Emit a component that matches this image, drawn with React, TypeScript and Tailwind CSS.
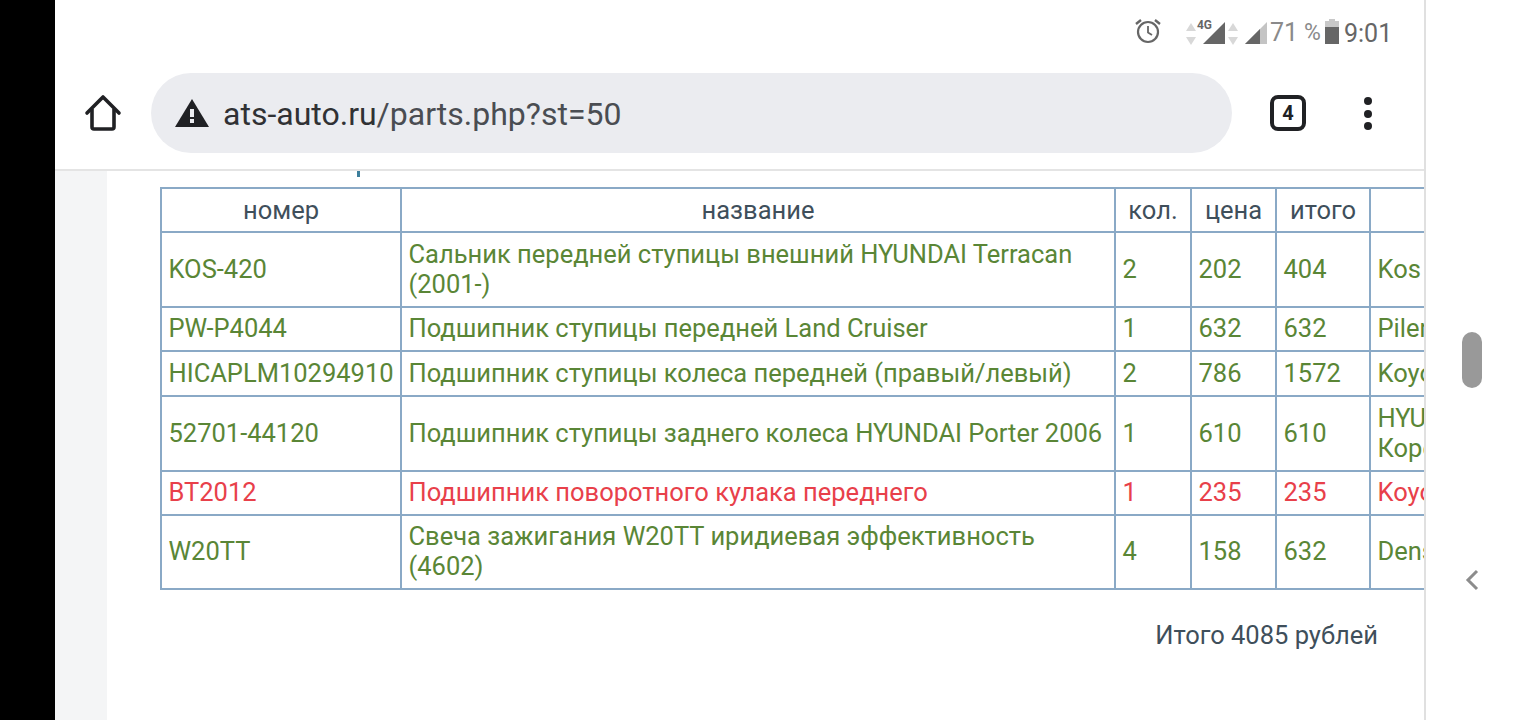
import React from 'react';

const rows = [
  { no: 'KOS-420', name: 'Сальник передней ступицы внешний HYUNDAI Terracan (2001-)', qty: '2', price: '202', total: '404', brand: 'Kos', h: 'h-[75px]' },
  { no: 'PW-P4044', name: 'Подшипник ступицы передней Land Cruiser', qty: '1', price: '632', total: '632', brand: 'Pilenga', h: 'h-[44px]' },
  { no: 'HICAPLM10294910', name: 'Подшипник ступицы колеса передней (правый/левый)', qty: '2', price: '786', total: '1572', brand: 'Koyo', h: 'h-[45px]' },
  { no: '52701-44120', name: 'Подшипник ступицы заднего колеса HYUNDAI Porter 2006', qty: '1', price: '610', total: '610', brand: 'HYUNDAI Корея', h: 'h-[75px]' },
  { no: 'BT2012', name: 'Подшипник поворотного кулака переднего', qty: '1', price: '235', total: '235', brand: 'Koyo', h: 'h-[44px]', red: true },
  { no: 'W20TT', name: 'Свеча зажигания W20TT иридиевая эффективность (4602)', qty: '4', price: '158', total: '632', brand: 'Denso', h: 'h-[74px]' },
];

const StatusIcons = () => (
  <svg width="136" height="36" viewBox="0 0 136 36" className="shrink-0">
    {/* будильник */}
    <g fill="none" stroke="#666" strokeWidth="2.2">
      <circle cx="16" cy="17" r="10" />
      <path d="M16 11v6.5l4 2.5" strokeWidth="1.8" />
      <path d="M4 9l5-4M28 9l-5-4" strokeWidth="2.4" />
    </g>
    {/* стрелки данных */}
    <g fill="#d8d8d8">
      <path d="M59 8l5 8H54zM59 30l5-8H54z" />
      <path d="M101 8l5 8H96zM101 30l5-8H96z" />
    </g>
    {/* сигнал 1 */}
    <path d="M71 29L93 7v22z" fill="#666" />
    <text x="65" y="14" fontSize="13" fontWeight="700" fill="#666" fontFamily="Roboto, sans-serif" textLength="15" lengthAdjust="spacingAndGlyphs">4G</text>
    {/* сигнал 2 */}
    <path d="M113 29l22-22v22z" fill="#c4c4c4" />
    <path d="M113 29l15-15v15z" fill="#666" />
  </svg>
);

export default function App() {
  const th = 'border-2 border-[#8aa9c6] font-normal text-center align-middle text-[#3f4f5b] px-2 h-[44px]';
  const td = 'border-2 border-[#8aa9c6] align-middle px-[6.5px] pb-[2px] font-normal overflow-hidden';
  return (
    <div className="flex w-[1520px] h-[720px] overflow-hidden bg-white font-['Roboto',sans-serif]">
      <div className="w-[55px] shrink-0 bg-black" />

      <div className="w-[1371px] shrink-0 flex flex-col border-r-2 border-[#e0e0e0]">
        {/* статус-бар */}
        <div className="h-[73px] shrink-0 flex items-start justify-end pt-[15px] pr-[34px] text-[#666]">
          <StatusIcons />
          <span className="text-[25px] leading-[36px] ml-[2px] w-[34px] text-[#8a8a8a]">71</span>
          <span className="text-[23px] leading-[36px] w-[20px] text-[#8a8a8a]">%</span>
          <svg width="14" height="25" viewBox="0 0 14 25" className="mt-[4px] ml-[1px] mr-[5px]">
            <path d="M4 0h6v2h4v23H0V2h4z" fill="#c8c8c8" />
            <rect y="8" width="14" height="17" fill="#666" />
          </svg>
          <span className="text-[25px] leading-[38px] w-[46px] whitespace-nowrap">9:01</span>
        </div>

        {/* панель браузера */}
        <div className="h-[98px] shrink-0 flex items-start border-b-2 border-[#e4e4e4]">
          <div className="w-[96px] shrink-0 flex justify-center pt-[21px]">
            <svg width="38" height="38" viewBox="0 0 38 38" fill="none" stroke="#202124" strokeWidth="3.6" strokeLinejoin="round">
              <path d="M3 19L19 3l16 16" strokeLinecap="round" />
              <path d="M8 15v18a2 2 0 0 0 2 2h18a2 2 0 0 0 2-2V15" />
            </svg>
          </div>
          <div className="w-[1081px] h-[80px] shrink-0 rounded-[40px] bg-[#ebecf0] flex items-center pl-[24px]">
            <svg width="34" height="30" viewBox="0 0 34 30" className="shrink-0">
              <path d="M17 1l17 28H0z" fill="#202124" />
              <rect x="15" y="11" width="4" height="8" fill="#ebecf0" />
              <rect x="15" y="21" width="4" height="4" fill="#ebecf0" />
            </svg>
            <span className="ml-[14px] mt-[2px] text-[32px] leading-none text-[#303134]">
              ats-auto.ru<span className="text-[#4a4d52]">/parts.php?st=50</span>
            </span>
          </div>
          <div className="ml-[38px] mt-[22px] w-[36px] h-[36px] shrink-0 rounded-[8px] border-[4px] border-[#202124] flex items-center justify-center text-[20px] font-bold text-[#202124]">
            4
          </div>
          <div className="ml-[58px] mt-[24px] flex flex-col gap-[4.5px] shrink-0">
            <span className="w-[8px] h-[8px] rounded-full bg-[#202124]" />
            <span className="w-[8px] h-[8px] rounded-full bg-[#202124]" />
            <span className="w-[8px] h-[8px] rounded-full bg-[#202124]" />
          </div>
        </div>

        {/* контент */}
        <div className="flex flex-1 min-h-0">
          <div className="w-[52px] shrink-0 bg-[#f4f5f6]" />
          <div className="flex-1 min-w-0 overflow-hidden relative">
            <span className="absolute left-[250px] top-0 w-[3px] h-[6px] bg-[#3d7f9c]" />
            <div className="pt-[16px] pl-[53px] overflow-hidden">
              <table className="table-fixed border-collapse w-[1400px] text-[25.5px] leading-[30px]">
                <colgroup>
                  <col className="w-[240px]" />
                  <col className="w-[714px]" />
                  <col className="w-[76px]" />
                  <col className="w-[85px]" />
                  <col className="w-[94px]" />
                  <col className="w-[191px]" />
                </colgroup>
                <thead>
                  <tr>
                    <th className={th}>номер</th>
                    <th className={th}>название</th>
                    <th className={th}>кол.</th>
                    <th className={th}>цена</th>
                    <th className={th}>итого</th>
                    <th className={th}></th>
                  </tr>
                </thead>
                <tbody>
                  {rows.map(r => (
                    <tr key={r.no} className={`${r.h} ${r.red ? 'text-[#e8404a]' : 'text-[#5a8636]'}`}>
                      <td className={td}>{r.no}</td>
                      <td className={td}>{r.name}</td>
                      <td className={td}>{r.qty}</td>
                      <td className={td}>{r.price}</td>
                      <td className={td}>{r.total}</td>
                      <td className={td}>{r.brand}</td>
                    </tr>
                  ))}
                </tbody>
              </table>
            </div>
            <div className="mt-[30px] pr-[46px] text-right text-[25.5px] leading-[30px] text-[#3f4f5b]">Итого 4085 рублей</div>
          </div>
        </div>
      </div>

      {/* боковая панель */}
      <div className="flex-1 flex flex-col items-center pt-[332px] pr-[2px]">
        <div className="w-[20px] h-[56px] rounded-[10px] bg-[#999]" />
        <svg width="16" height="24" viewBox="0 0 16 24" fill="none" stroke="#8c8c8c" strokeWidth="3" className="mt-[180px]">
          <path d="M13 3L4 12l9 9" />
        </svg>
      </div>
    </div>
  );
}
